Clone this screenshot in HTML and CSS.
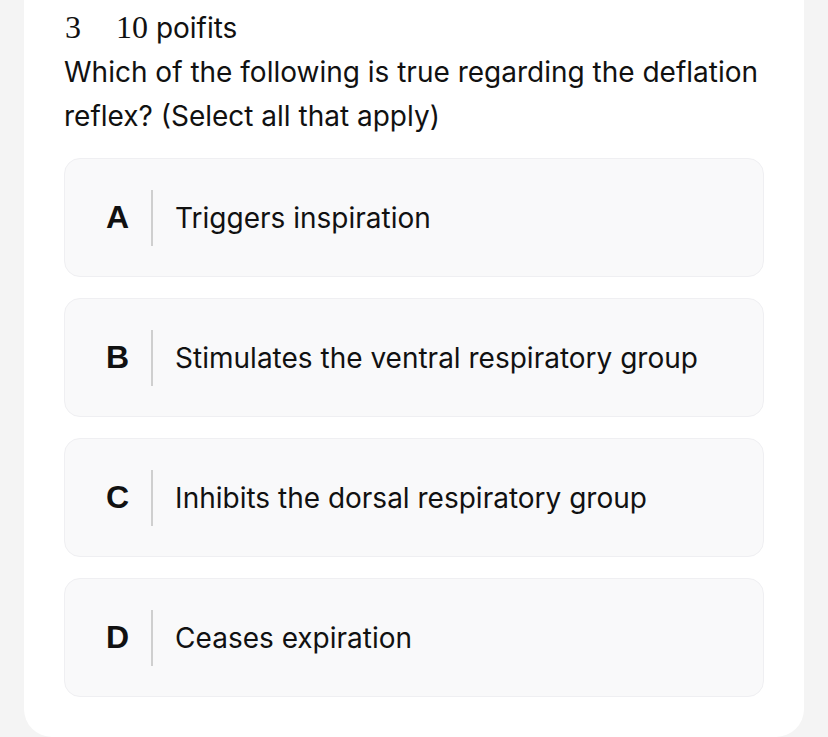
FILE: index.html
```html
<!DOCTYPE html>
<html>
<head>
<meta charset="utf-8">
<link rel="stylesheet" href="styles.css">
</head>
<body>
<div class="card">
  <div class="header"><span class="num">3</span><span class="pts"><span class="num">10</span> poifits</span></div>
  <p class="question">Which of the following is true regarding the deflation reflex? (Select all that apply)</p>
  <div class="options">
    <div class="option"><span class="letter">A</span><span class="divider"></span><span class="text">Triggers inspiration</span></div>
    <div class="option"><span class="letter">B</span><span class="divider"></span><span class="text">Stimulates the ventral respiratory group</span></div>
    <div class="option"><span class="letter">C</span><span class="divider"></span><span class="text">Inhibits the dorsal respiratory group</span></div>
    <div class="option"><span class="letter">D</span><span class="divider"></span><span class="text">Ceases expiration</span></div>
  </div>
</div>
</body>
</html>
```
FILE: styles.css
```css
html, body {
  margin: 0;
  padding: 0;
  background: #f4f4f4;
  height: 737px;
  overflow: hidden;
}
.card {
  margin: 0 24px;
  background: #ffffff;
  border-radius: 0 0 28px 28px;
  padding: 7px 40px 40px 40px;
  font-family: Inter, "Noto Sans", sans-serif;
  color: #111;
}
.header {
  display: flex;
  align-items: baseline;
  gap: 35px;
  height: 40px;
  font-size: 28px;
  line-height: 40px;
  padding-left: 1px;
}
.num {
  font-family: "Liberation Serif", serif;
  font-size: 32px;
}
.question {
  margin: 3px 0 0 0;
  font-size: 28px;
  line-height: 44px;
}
.options {
  margin-top: 20px;
  display: flex;
  flex-direction: column;
  gap: 21px;
}
.option {
  box-sizing: border-box;
  height: 119px;
  background: #f9f9fa;
  border: 1.5px solid #efeff2;
  border-radius: 16px;
  display: flex;
  align-items: center;
  padding-left: 41px;
}
.letter {
  font-family: "Liberation Sans", Arial, sans-serif;
  font-weight: bold;
  font-size: 32px;
}
.divider {
  width: 2px;
  height: 56px;
  background: #cfcfcf;
  margin: 0 22px 0 22px;
}
.text {
  font-size: 28px;
}
```
